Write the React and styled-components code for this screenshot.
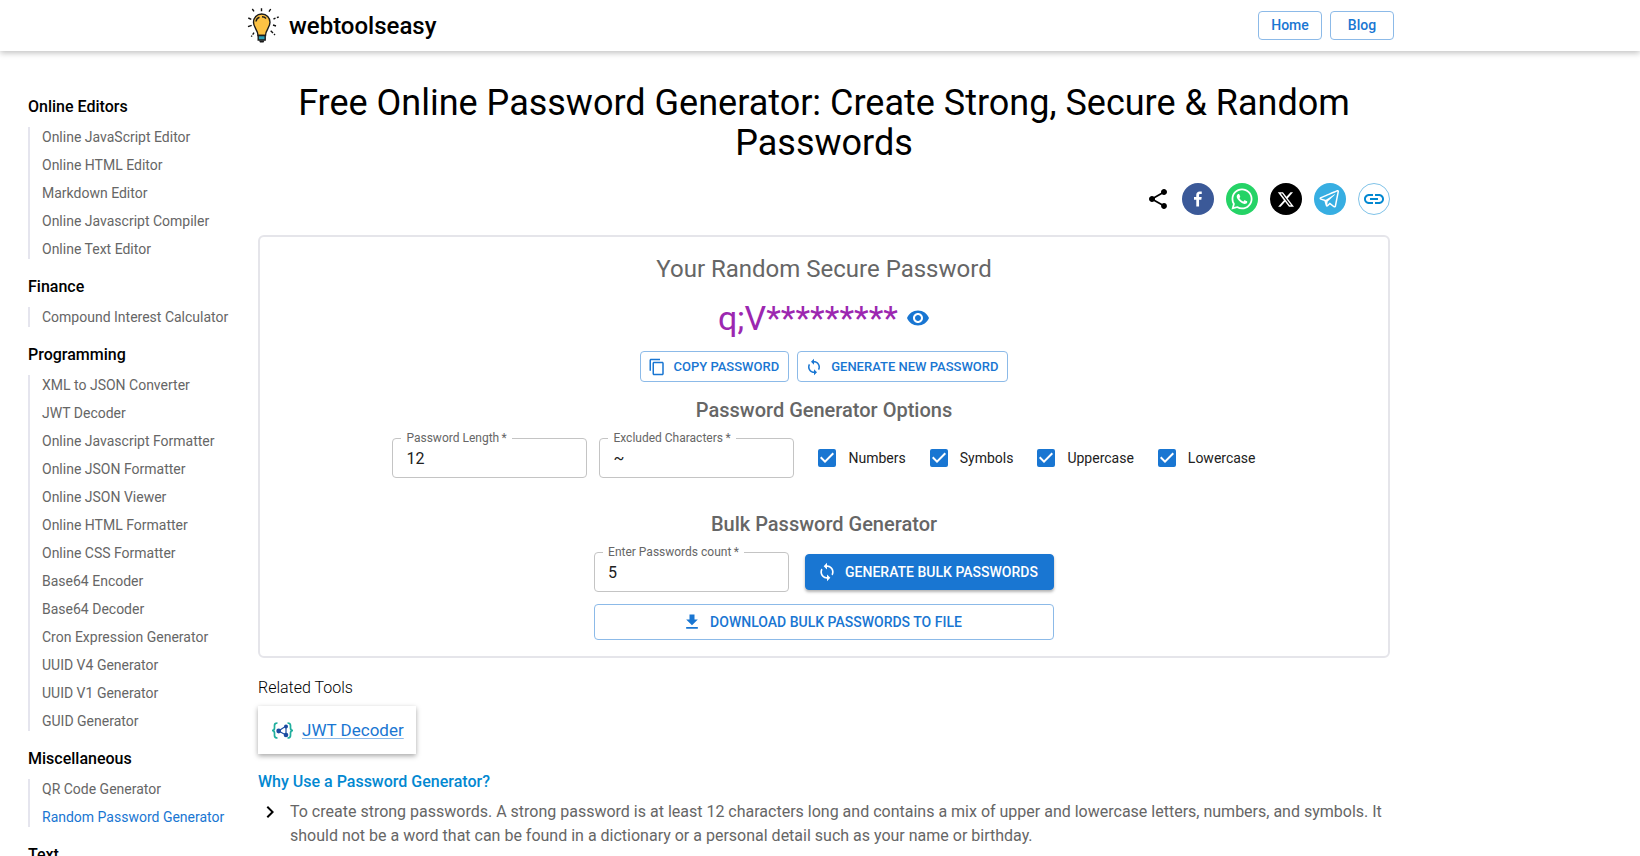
import React, { useState } from 'react';
import styled, { createGlobalStyle } from 'styled-components';
import {
    MdShare,
    MdLink,
    MdVisibility,
    MdContentCopy,
    MdSync,
    MdGetApp,
    MdChevronRight
} from 'react-icons/md';
import { FaWhatsapp } from 'react-icons/fa';
import { LiaTelegramPlane } from 'react-icons/lia';

const GlobalStyle = createGlobalStyle`
    * {
        box-sizing: border-box;
    }

    body {
        margin: 0;
        background-color: #fff;
        color: #000;
        font-family: Roboto, "Liberation Sans", sans-serif;
        font-size: 16px;
        line-height: 24px;
        overflow-x: hidden;
    }

    h1, h2, h3, p, ul {
        margin: 0;
        padding: 0;
    }
`;

// Header
const Header = styled.header`
    position: relative;
    padding: 8px 15%;
    display: flex;
    align-items: center;
    justify-content: space-between;
    background-color: #fff;
    box-shadow: 0 2px 6px rgba(0, 0, 0, 0.25);
`;

const Brand = styled.a`
    display: flex;
    align-items: center;
    gap: 8px;
    color: #000;
    font-size: 24px;
    font-weight: 500;
    text-decoration: none;
`;

const Nav = styled.nav`
    display: flex;
    gap: 8px;
`;

const NavLink = styled.a`
    min-width: 64px;
    padding: 2px 9px;
    border: 1px solid #8cbae8;
    border-radius: 4px;
    color: #1976d2;
    font-size: 14px;
    font-weight: 500;
    line-height: 23px;
    text-align: center;
    text-decoration: none;

    &:hover {
        background-color: #f5f9fd;
    }
`;

// Page
const Page = styled.div`
    display: flex;
    align-items: flex-start;
`;

const Sidebar = styled.aside`
    flex: 0 0 250px;
    padding: 44px 0 24px 28px;
    display: flex;
    flex-direction: column;
    gap: 16px;
`;

const SidebarTitle = styled.p`
    margin-bottom: 8px;
    font-weight: 500;
    font-size: 16px;
`;

const SidebarList = styled.ul`
    padding-left: 12px;
    border-left: 2px solid #e5e5ee;
    display: flex;
    flex-direction: column;
    gap: 8px;
    list-style: none;
    font-size: 14px;
    line-height: 20px;
`;

const SidebarLink = styled.a`
    display: block;
    color: ${props => (props.$active ? '#1976d2' : '#666')};
    text-decoration: none;

    &:hover {
        color: #1976d2;
    }
`;

const Main = styled.main`
    flex: 0 1 70%;
    min-width: 0;
    padding: 32px 8px 24px;
`;

const PageTitle = styled.h1`
    font-size: 36px;
    font-weight: 400;
    line-height: 40px;
    text-align: center;
`;

const ShareRow = styled.div`
    margin: 20px 0;
    display: flex;
    align-items: center;
    justify-content: flex-end;
    gap: 12px;
`;

const ShareButton = styled.button`
    width: 32px;
    height: 32px;
    padding: 0;
    display: flex;
    align-items: center;
    justify-content: center;
    border: ${props => (props.$outlined ? '1px solid #80c3e8' : 'none')};
    border-radius: 50%;
    background-color: ${props => props.$bg || '#fff'};
    color: ${props => (props.$outlined ? '#0288d1' : '#fff')};
    cursor: pointer;
`;

// Generator card
const Card = styled.section`
    padding: 16px;
    border: 2px solid #e5e5ea;
    border-radius: 6px;
    display: flex;
    flex-direction: column;
    align-items: center;
    gap: 12px;
`;

const CardTitle = styled.h2`
    color: #666;
    font-size: 24px;
    font-weight: 400;
    line-height: 32px;
`;

const SectionTitle = styled.h3`
    color: #666;
    font-size: 20px;
    font-weight: 500;
    line-height: 32px;
`;

const PasswordRow = styled.div`
    display: flex;
    align-items: center;
    gap: 8px;
    color: #9c27b0;
    font-size: 34px;
    line-height: 42px;
`;

const IconButton = styled.button`
    padding: 0;
    display: flex;
    border: none;
    background: none;
    color: #1976d2;
    cursor: pointer;
`;

const ButtonRow = styled.div`
    display: flex;
    flex-wrap: wrap;
    justify-content: center;
    gap: 8px;
`;

const Button = styled.button`
    padding: ${props => (props.$small ? '3px 9px 3px 7px' : '5px 15px 5px 11px')};
    display: flex;
    align-items: center;
    justify-content: center;
    gap: 8px;
    border: 1px solid ${props => (props.$filled ? '#1976d2' : '#8cbae8')};
    border-radius: 4px;
    background-color: ${props => (props.$filled ? '#1976d2' : '#fff')};
    box-shadow: ${props => (props.$filled ? '0 2px 3px rgba(0, 0, 0, 0.3)' : 'none')};
    color: ${props => (props.$filled ? '#fff' : '#1976d2')};
    font-family: inherit;
    font-size: ${props => (props.$small ? '13px' : '14px')};
    font-weight: 500;
    line-height: ${props => (props.$small ? '23px' : '24px')};
    text-transform: uppercase;
    cursor: pointer;
`;

const OptionsRow = styled.div`
    margin-bottom: 18px;
    display: flex;
    flex-wrap: wrap;
    align-items: center;
    justify-content: center;
    gap: 12px;
`;

const BulkGrid = styled.div`
    display: flex;
    flex-direction: column;
    gap: 12px;
`;

const BulkRow = styled.div`
    display: flex;
    align-items: center;
    gap: 16px;
`;

const Field = styled.div`
    position: relative;
    width: 195px;
`;

const FieldLabel = styled.label`
    position: absolute;
    top: -8px;
    left: 9px;
    padding: 0 5px;
    background-color: #fff;
    color: #666;
    font-size: 12px;
    line-height: 16px;
`;

const FieldInput = styled.input`
    width: 100%;
    height: 40px;
    padding: 0 13px;
    border: 1px solid #c4c4c4;
    border-radius: 4px;
    background-color: #fff;
    color: #212121;
    font-family: inherit;
    font-size: 16px;
    outline: none;

    &:focus {
        border-color: #1976d2;
    }
`;

const CheckLabel = styled.label`
    margin-left: 12px;
    display: flex;
    align-items: center;
    gap: 12px;
    color: #212121;
    font-size: 14px;
    cursor: pointer;
`;

const CheckBoxWrap = styled.span`
    display: grid;

    > * {
        grid-area: 1 / 1;
    }

    svg {
        pointer-events: none;
    }
`;

const CheckInput = styled.input`
    appearance: none;
    width: 18px;
    height: 18px;
    margin: 0;
    border: 2px solid #666;
    border-radius: 2px;
    cursor: pointer;

    &:checked {
        border-color: #1976d2;
        background-color: #1976d2;
    }
`;

// Related tools and article
const RelatedTitle = styled.p`
    margin: 18px 0 6px;
    font-weight: 300;
`;

const ToolCard = styled.a`
    width: fit-content;
    padding: 12px;
    display: flex;
    align-items: center;
    gap: 8px;
    box-shadow: 0 2px 5px rgba(0, 0, 0, 0.35);
    color: #1976d2;
    font-size: 17px;
    text-decoration: none;
`;

const ToolName = styled.span`
    text-decoration: underline;
    text-decoration-color: #8cbae8;
    text-decoration-thickness: 1px;
    text-underline-offset: 2px;
`;

const ArticleTitle = styled.h2`
    margin: 16px 0 6px;
    color: #0288d1;
    font-size: 16px;
    font-weight: 500;
`;

const ArticleList = styled.ul`
    list-style: none;
`;

const ArticleItem = styled.li`
    display: grid;
    grid-template-columns: 24px 1fr;
    gap: 8px;
    color: #666;

    svg {
        color: #000;
    }
`;

const menu = [
    {
        title: 'Online Editors',
        items: [
            'Online JavaScript Editor',
            'Online HTML Editor',
            'Markdown Editor',
            'Online Javascript Compiler',
            'Online Text Editor'
        ]
    },
    { title: 'Finance', items: ['Compound Interest Calculator'] },
    {
        title: 'Programming',
        items: [
            'XML to JSON Converter',
            'JWT Decoder',
            'Online Javascript Formatter',
            'Online JSON Formatter',
            'Online JSON Viewer',
            'Online HTML Formatter',
            'Online CSS Formatter',
            'Base64 Encoder',
            'Base64 Decoder',
            'Cron Expression Generator',
            'UUID V4 Generator',
            'UUID V1 Generator',
            'GUID Generator'
        ]
    },
    { title: 'Miscellaneous', items: ['QR Code Generator', 'Random Password Generator'] },
    { title: 'Text', items: [] }
];

const BulbLogo = () => (
    <svg width="35" height="35" viewBox="0 0 35 35" fill="none" aria-hidden="true">
        <path
            d="M6.300 1L8 3.300M15.500 0.300v3M24.700 1L23 3.700M32.700 9l-1.800 0.700M29.500 10.200L27.500 11M30 18l-3-1M29 27l-1-1M27 25l-2.300-2.300M2.300 10l3 1.300M2 18.700l3.700-1.400M5.300 28.700L6 27.700M6.700 26.700L8 24.700"
            stroke="#111"
            strokeWidth="1.400"
        />
        <path
            d="M15.700 6c-5 0-8.200 3.700-8.200 8.300 0 5.700 4.500 7.400 4.500 13.200h7.500c0-5.800 4.500-7.500 4.500-13.200C24 9.700 20.700 6 15.700 6z"
            fill="#fcc244"
            stroke="#1b1b1b"
            strokeWidth="1.400"
        />
        <path d="M10 13.500c.3-2.300 1.500-3.700 3.500-4.300M16 8.800c1.800 0 3 .5 4 1.700" stroke="#1b1b1b" strokeWidth="1.500" />
        <path d="M12.200 27.500h7v4.500h-7z" fill="#2b9fb5" stroke="#1b1b1b" strokeWidth="1.400" />
        <path d="M13 32.500h5.500l-1 2h-3.500z" fill="#1b1b1b" />
    </svg>
);

const JsonIcon = () => (
    <svg width="24" height="24" viewBox="0 0 24 24" fill="none" aria-hidden="true">
        <path
            d="M7.500 5c-2.500 0-3 .8-3 2.500v2.500c0 1.700-.8 2.500-2.500 2.500 1.700 0 2.500.8 2.500 2.500v2.500c0 1.700.5 2.500 3 2.500M17.500 5c2.500 0 3 .8 3 2.500v2.500c0 1.700.8 2.500 2.500 2.500-1.700 0-2.500.8-2.500 2.500v2.500c0 1.700-.5 2.500-3 2.500"
            stroke="#1fae9d"
            strokeWidth="1.700"
        />
        <path d="M8.500 13l7.500-5v9z" stroke="#1a4aa0" strokeWidth="1.200" />
        <circle cx="8.700" cy="13" r="2.400" fill="#1a4aa0" />
        <circle cx="16" cy="8.500" r="2" fill="#1a4aa0" />
        <circle cx="16" cy="17" r="2.300" fill="#1a4aa0" />
    </svg>
);

const FacebookIcon = () => (
    <svg width="32" height="32" viewBox="0 0 64 64" fill="currentColor" aria-hidden="true">
        <path d="M34.1,47V33.3h4.6l0.700-5.300h-5.300v-3.400c0-1.500,0.400-2.600,2.600-2.600l2.800,0v-4.800c-0.500-0.100-2.200-0.200-4.100-0.200c-4.100,0-6.900,2.500-6.900,7V28H24v5.300h4.600V47H34.100z" />
    </svg>
);

const XIcon = () => (
    <svg width="32" height="32" viewBox="0 0 64 64" fill="currentColor" aria-hidden="true">
        <path d="M41.116 18.375h4.962l-10.840 12.390l12.753 16.860H38.005l-7.821-10.225L21.235 47.625H16.270l11.595-13.252L15.631 18.375H25.870l7.070 9.346zm-1.741 26.280h2.749L24.376 21.189H21.425z" />
    </svg>
);

const CheckOption = ({ label }) => {
    const [checked, setChecked] = useState(true);

    return (
        <CheckLabel>
            <CheckBoxWrap>
                <CheckInput type="checkbox" checked={checked} onChange={() => setChecked(!checked)} />
                {checked && (
                    <svg width="18" height="18" viewBox="3 3 18 18" aria-hidden="true">
                        <path d="M10 17l-5-5 1.410-1.410L10 14.170l7.590-7.590L19 8l-9 9z" fill="#fff" />
                    </svg>
                )}
            </CheckBoxWrap>
            {label}
        </CheckLabel>
    );
};

const TextField = ({ id, label, type = 'text', initial }) => {
    const [value, setValue] = useState(initial);

    return (
        <Field>
            <FieldInput id={id} type={type} value={value} onChange={e => setValue(e.target.value)} />
            <FieldLabel htmlFor={id}>
                {label}&thinsp;*
            </FieldLabel>
        </Field>
    );
};

const SidebarMenu = () => (
    <Sidebar>
        {menu.map(group => (
            <div key={group.title}>
                <SidebarTitle>{group.title}</SidebarTitle>
                <SidebarList>
                    {group.items.map(item => (
                        <li key={item}>
                            <SidebarLink href="#" $active={item === 'Random Password Generator'}>
                                {item}
                            </SidebarLink>
                        </li>
                    ))}
                </SidebarList>
            </div>
        ))}
    </Sidebar>
);

const PasswordGenerator = () => (
    <Card>
        <CardTitle>Your Random Secure Password</CardTitle>
        <PasswordRow>
            <span>q;V*********</span>
            <IconButton type="button" aria-label="Show password">
                <MdVisibility size={24} />
            </IconButton>
        </PasswordRow>
        <ButtonRow>
            <Button type="button" $small>
                <MdContentCopy size={18} />
                Copy Password
            </Button>
            <Button type="button" $small>
                <MdSync size={18} />
                Generate New Password
            </Button>
        </ButtonRow>
        <SectionTitle>Password Generator Options</SectionTitle>
        <OptionsRow>
            <TextField id="length" label="Password Length" initial="12" />
            <TextField id="excluded" label="Excluded Characters" initial="~" />
            <CheckOption label="Numbers" />
            <CheckOption label="Symbols" />
            <CheckOption label="Uppercase" />
            <CheckOption label="Lowercase" />
        </OptionsRow>
        <SectionTitle>Bulk Password Generator</SectionTitle>
        <BulkGrid>
            <BulkRow>
                <TextField id="count" label="Enter Passwords count" initial="5" />
                <Button type="button" $filled>
                    <MdSync size={20} />
                    Generate Bulk Passwords
                </Button>
            </BulkRow>
            <Button type="button">
                <MdGetApp size={20} />
                Download Bulk Passwords To File
            </Button>
        </BulkGrid>
    </Card>
);

const App = () => (
    <>
        <GlobalStyle />
        <Header>
            <Brand href="#">
                <BulbLogo />
                webtoolseasy
            </Brand>
            <Nav>
                <NavLink href="#">Home</NavLink>
                <NavLink href="#">Blog</NavLink>
            </Nav>
        </Header>
        <Page>
            <SidebarMenu />
            <Main>
                <PageTitle>
                    Free Online Password Generator: Create Strong, Secure &amp; Random Passwords
                </PageTitle>
                <ShareRow>
                    <MdShare size={24} />
                    <ShareButton type="button" aria-label="Facebook" $bg="#3b5998">
                        <FacebookIcon />
                    </ShareButton>
                    <ShareButton type="button" aria-label="WhatsApp" $bg="#25d366">
                        <FaWhatsapp size={24} />
                    </ShareButton>
                    <ShareButton type="button" aria-label="X" $bg="#000">
                        <XIcon />
                    </ShareButton>
                    <ShareButton type="button" aria-label="Telegram" $bg="#37aee2">
                        <LiaTelegramPlane size={24} />
                    </ShareButton>
                    <ShareButton type="button" aria-label="Copy link" $outlined>
                        <MdLink size={24} />
                    </ShareButton>
                </ShareRow>
                <PasswordGenerator />
                <RelatedTitle>Related Tools</RelatedTitle>
                <ToolCard href="#">
                    <JsonIcon />
                    <ToolName>JWT Decoder</ToolName>
                </ToolCard>
                <ArticleTitle>Why Use a Password Generator?</ArticleTitle>
                <ArticleList>
                    <ArticleItem>
                        <MdChevronRight size={24} />
                        <p>
                            To create strong passwords. A strong password is at least 12 characters long and
                            contains a mix of upper and lowercase letters, numbers, and symbols. It should not
                            be a word that can be found in a dictionary or a personal detail such as your name
                            or birthday.
                        </p>
                    </ArticleItem>
                </ArticleList>
            </Main>
        </Page>
    </>
);

export default App;
